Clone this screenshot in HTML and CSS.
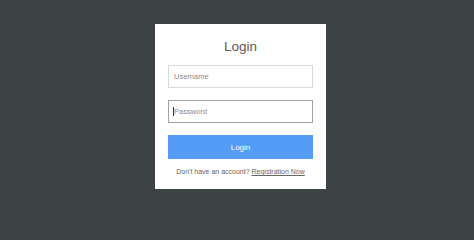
FILE: index.html
```html
<!DOCTYPE html>
<html>
<head>
<meta charset="utf-8">
<link rel="stylesheet" href="styles.css">
</head>
<body>
<div class="page">
  <form class="card">
    <h1 class="title">Login</h1>
    <input class="field" type="text" placeholder="Username">
    <div class="field-wrap">
      <input class="field field-focused" type="password" placeholder="Password">
      <span class="caret"></span>
    </div>
    <button class="btn" type="button">Login</button>
    <p class="note">Don't have an account? <a class="link" href="#">Registration Now</a></p>
  </form>
</div>
</body>
</html>
```
FILE: styles.css
```css
html, body {
  margin: 0;
  padding: 0;
  height: 100%;
}
body {
  background: #3c4144;
  font-family: "Liberation Sans", Arial, sans-serif;
}
.page {
  display: flex;
  justify-content: center;
  padding: 24px 0 0 7px;
}
.card {
  width: 171px;
  height: 165px;
  box-sizing: border-box;
  background: #ffffff;
  padding: 14px 13px 0 13px;
  display: flex;
  flex-direction: column;
}
.title {
  margin: 0 0 10px 0;
  font-size: 13.5px;
  font-weight: normal;
  color: #5a5a5a;
  text-align: center;
  line-height: 17px;
}
.field {
  display: block;
  width: 100%;
  height: 23px;
  box-sizing: border-box;
  border: 1px solid #d9d9d9;
  padding: 0 5px;
  font-family: inherit;
  font-size: 7.5px;
  color: #555;
  outline: none;
  margin: 0;
}
.field::placeholder {
  color: #8a8a8a;
}
.field-wrap {
  position: relative;
  margin-top: 12px;
}
.field-focused {
  border-color: #a2a2a2;
}
.caret {
  position: absolute;
  left: 5px;
  top: 7px;
  width: 1px;
  height: 9px;
  background: #333;
}
.btn {
  margin-top: 12px;
  height: 24px;
  border: none;
  background: #559cf7;
  color: #ffffff;
  font-family: inherit;
  font-size: 8px;
  padding: 0;
  width: 100%;
}
.note {
  margin: 8px 0 0 0;
  font-size: 7px;
  color: #666666;
  text-align: center;
  line-height: 10px;
}
.link,
.link:visited {
  color: #666666;
  text-decoration: underline;
}
```
